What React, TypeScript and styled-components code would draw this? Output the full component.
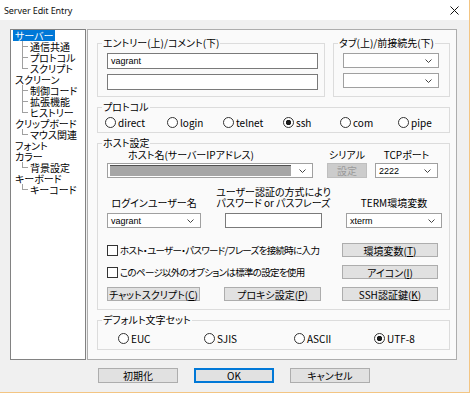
import React from "react";
import styled, { createGlobalStyle } from "styled-components";

const GlobalStyle = createGlobalStyle`
  html, body {
    margin: 0;
    padding: 0;
    background: #fff;
  }
`;

const UI_FONT = `"Noto Sans CJK JP", "Liberation Sans", sans-serif`;
const LATIN_FONT = `"Liberation Sans", "Noto Sans CJK JP", sans-serif`;

const Window = styled.div`
  width: 469px;
  height: 392px;
  border-right: 1px solid #f3c583;
  border-bottom: 1px solid #f3c583;
  display: flex;
  flex-direction: column;
  background: #f0f0f0;
  font-family: ${UI_FONT};
  font-size: 10px;
  color: #000;
  font-feature-settings: "palt" 1;
`;

const TitleBar = styled.div`
  height: 20px;
  flex: none;
  background: #fff;
  display: flex;
  align-items: center;
  justify-content: space-between;
  padding: 0 10px 0 4px;
`;

const Title = styled.span`
  font-family: "Noto Sans", "Open Sans", sans-serif;
  font-size: 9px;
  letter-spacing: -0.1px;
  color: #111;
`;

const Body = styled.div`
  flex: 1;
  display: flex;
  flex-direction: column;
  padding: 9px 12px 0 10px;
`;

const Panes = styled.div`
  display: flex;
  gap: 1px;
  height: 331px;
`;

const Tree = styled.div`
  width: 74px;
  flex: none;
  background: #fff;
  border: 1px solid #828282;
  line-height: 11px;
`;

const TreeRoot = styled.div`
  height: 11px;
  padding-left: 2px;
  white-space: nowrap;
`;

const TreeText = styled.span<{ $selected?: boolean }>`
  display: inline-block;
  padding: 0 2px;
  background: ${(p) => (p.$selected ? "#0078d7" : "transparent")};
  color: ${(p) => (p.$selected ? "#fff" : "#000")};
`;

const TreeChild = styled.div<{ $last?: boolean }>`
  position: relative;
  height: 11px;
  padding-left: 19px;
  white-space: nowrap;
  &::before {
    content: "";
    position: absolute;
    left: 11px;
    top: 0;
    height: ${(p) => (p.$last ? "6px" : "11px")};
    border-left: 1px solid #a0a0a0;
  }
  &::after {
    content: "";
    position: absolute;
    left: 11px;
    top: 5px;
    width: 6px;
    border-top: 1px solid #a0a0a0;
  }
`;

const MainPanel = styled.div`
  width: 353px;
  flex: none;
  border: 1px solid #adadad;
  background: #fafafa;
  padding: 7px 6px 0 9px;
  display: flex;
  flex-direction: column;
  gap: 4px;
`;

const Row = styled.div`
  display: flex;
  gap: 8px;
`;

const Group = styled.fieldset<{ $w?: number; $h: number }>`
  margin: 0;
  padding: 0;
  min-width: 0;
  box-sizing: border-box;
  width: ${(p) => (p.$w ? `${p.$w}px` : "auto")};
  height: ${(p) => p.$h}px;
  border: 1px solid #dcdcdc;
`;

const Legend = styled.legend`
  margin-left: 4px;
  padding: 0 1px;
  line-height: 12px;
  font-size: 10px;
`;

const StackBody = styled.div`
  display: flex;
  flex-direction: column;
  gap: 5px;
  padding: 4px 0 0 9px;
`;

const Edit = styled.div<{ $w: number; $h?: number }>`
  width: ${(p) => p.$w}px;
  height: ${(p) => p.$h ?? 16}px;
  box-sizing: border-box;
  border: 1px solid #7a7a7a;
  background: #fff;
  padding-left: 3px;
  font-family: ${LATIN_FONT};
  font-size: 9px;
  line-height: 14px;
`;

const Combo = styled.div<{ $w: number }>`
  width: ${(p) => p.$w}px;
  height: 15px;
  box-sizing: border-box;
  border: 1px solid #a0a0a0;
  background: #fff;
  display: flex;
  align-items: center;
  padding: 0 6px 0 3px;
  font-family: ${LATIN_FONT};
  font-size: 9px;
`;

const ComboText = styled.span`
  flex: 1;
`;

const ComboFill = styled.span`
  flex: 1;
  height: 10px;
  margin: 0 8px 0 -1px;
  background: #a6a6a6;
  border-top: 1px solid #505050;
`;

const Chevron = () => (
  <svg width="7" height="4" viewBox="0 0 7 4">
    <polyline points="0.5,0.5 3.5,3.5 6.5,0.5" fill="none" stroke="#444" strokeWidth="1" />
  </svg>
);

const RadioRow = styled.div<{ $cols: string; $pl: number; $mt: number }>`
  display: grid;
  grid-template-columns: ${(p) => p.$cols};
  padding-left: ${(p) => p.$pl}px;
  margin-top: ${(p) => p.$mt}px;
  align-items: center;
`;

const Choice = styled.span`
  display: inline-flex;
  align-items: center;
  gap: 2px;
  white-space: nowrap;
`;

const RadioDot = styled.span<{ $checked?: boolean }>`
  width: 9px;
  height: 9px;
  flex: none;
  border: 1px solid #333;
  border-radius: 50%;
  background: ${(p) =>
    p.$checked ? "radial-gradient(circle, #1a1a1a 0 2.4px, #fff 3px)" : "#fff"};
`;

const Radio = ({ label, checked }: { label: string; checked?: boolean }) => (
  <Choice>
    <RadioDot $checked={checked} />
    {label}
  </Choice>
);

const HostBody = styled.div`
  padding-left: 9px;
`;

const TopRow = styled.div`
  display: flex;
  align-items: flex-end;
`;

const Field = styled.div<{ $w: number; $ml?: number }>`
  width: ${(p) => p.$w}px;
  margin-left: ${(p) => p.$ml ?? 0}px;
  display: flex;
  flex-direction: column;
  gap: 2px;
`;

const FieldLabel = styled.div<{ $pr?: number }>`
  height: 12px;
  line-height: 12px;
  text-align: center;
  white-space: nowrap;
  padding-right: ${(p) => p.$pr ?? 0}px;
`;

const Grid = styled.div`
  display: grid;
  grid-template-columns: 94px 97px 96px;
  column-gap: 24px;
  margin-top: 8px;
`;

const TallLabel = styled.div`
  height: 22px;
  line-height: 11px;
  display: flex;
  flex-direction: column;
  justify-content: flex-end;
  align-items: center;
  white-space: nowrap;
  margin-bottom: 5px;
`;

const Actions = styled.div`
  display: grid;
  grid-template-columns: 214px 96px;
  grid-auto-rows: 14px;
  row-gap: 8px;
  column-gap: 21px;
  margin-top: 15px;
`;

const CheckLine = styled.span`
  display: flex;
  align-items: center;
  gap: 2px;
  white-space: nowrap;
  font-size: 9.5px;
  letter-spacing: -0.7px;
`;

const CheckBox = styled.span`
  width: 9px;
  height: 9px;
  flex: none;
  border: 1px solid #333;
  background: #fff;
`;

const Pair = styled.div`
  display: flex;
  justify-content: space-between;
`;

const Button = styled.div<{ $w: number; $h?: number; $default?: boolean; $disabled?: boolean }>`
  width: ${(p) => p.$w}px;
  height: ${(p) => p.$h ?? 14}px;
  box-sizing: border-box;
  display: flex;
  align-items: center;
  justify-content: center;
  white-space: nowrap;
  background: ${(p) => (p.$disabled ? "#cccccc" : "#e1e1e1")};
  color: ${(p) => (p.$disabled ? "#9a9a9a" : "#000")};
  border: 1px solid ${(p) => (p.$default ? "#0078d7" : p.$disabled ? "#bfbfbf" : "#adadad")};
  box-shadow: ${(p) => (p.$default ? "inset 0 0 0 1px #0078d7" : "none")};
`;

const ButtonBar = styled.div`
  display: flex;
  margin-top: 8px;
  padding-left: 88px;
  gap: 16px;
`;

const CloseIcon = () => (
  <svg width="9" height="9" viewBox="0 0 9 9">
    <path d="M0.5 0.5 L8.5 8.5 M8.5 0.5 L0.5 8.5" stroke="#111" strokeWidth="1" />
  </svg>
);

const treeData: { name: string; selected?: boolean; children: string[] }[] = [
  { name: "サーバー", selected: true, children: ["通信共通", "プロトコル", "スクリプト"] },
  { name: "スクリーン", children: ["制御コード", "拡張機能", "ヒストリー"] },
  { name: "クリップボード", children: ["マウス関連"] },
  { name: "フォント", children: [] },
  { name: "カラー", children: ["背景設定"] },
  { name: "キーボード", children: ["キーコード"] },
];

export default function App() {
  return (
    <>
      <GlobalStyle />
      <Window>
        <TitleBar>
          <Title>Server Edit Entry</Title>
          <CloseIcon />
        </TitleBar>
        <Body>
          <Panes>
            <Tree>
              {treeData.map((node) => (
                <React.Fragment key={node.name}>
                  <TreeRoot>
                    <TreeText $selected={node.selected}>{node.name}</TreeText>
                  </TreeRoot>
                  {node.children.map((c, i) => (
                    <TreeChild key={c} $last={i === node.children.length - 1}>
                      {c}
                    </TreeChild>
                  ))}
                </React.Fragment>
              ))}
            </Tree>
            <MainPanel>
              <Row>
                <Group $w={228} $h={60}>
                  <Legend>エントリー(上)/コメント(下)</Legend>
                  <StackBody>
                    <Edit $w={211}>vagrant</Edit>
                    <Edit $w={211} />
                  </StackBody>
                </Group>
                <Group $w={117} $h={60}>
                  <Legend>タブ(上)/前接続先(下)</Legend>
                  <StackBody>
                    <Combo $w={96}>
                      <ComboText />
                      <Chevron />
                    </Combo>
                    <Combo $w={96}>
                      <ComboText />
                      <Chevron />
                    </Combo>
                  </StackBody>
                </Group>
              </Row>
              <Group $h={32}>
                <Legend>プロトコル</Legend>
                <RadioRow $cols="62px 56px 60px 57px 58px auto" $pl={7} $mt={2}>
                  <Radio label="direct" />
                  <Radio label="login" />
                  <Radio label="telnet" />
                  <Radio label="ssh" checked />
                  <Radio label="com" />
                  <Radio label="pipe" />
                </RadioRow>
              </Group>
              <Group $h={173}>
                <Legend>ホスト設定</Legend>
                <HostBody>
                  <TopRow>
                    <Field $w={206}>
                      <FieldLabel $pr={38}>ホスト名(サーバーIPアドレス)</FieldLabel>
                      <Combo $w={206}>
                        <ComboFill />
                        <Chevron />
                      </Combo>
                    </Field>
                    <Field $w={40} $ml={14}>
                      <FieldLabel>シリアル</FieldLabel>
                      <Button $w={40} $h={15} $disabled>
                        設定
                      </Button>
                    </Field>
                    <Field $w={63} $ml={8}>
                      <FieldLabel>TCPポート</FieldLabel>
                      <Combo $w={63}>
                        <ComboText>2222</ComboText>
                        <Chevron />
                      </Combo>
                    </Field>
                  </TopRow>
                  <Grid>
                    <div>
                      <TallLabel>ログインユーザー名</TallLabel>
                      <Combo $w={94}>
                        <ComboText>vagrant</ComboText>
                        <Chevron />
                      </Combo>
                    </div>
                    <div>
                      <TallLabel>
                        <span>ユーザー認証の方式により</span>
                        <span>パスワード or パスフレーズ</span>
                      </TallLabel>
                      <Edit $w={97} $h={15} />
                    </div>
                    <div>
                      <TallLabel>TERM環境変数</TallLabel>
                      <Combo $w={96}>
                        <ComboText>xterm</ComboText>
                        <Chevron />
                      </Combo>
                    </div>
                  </Grid>
                  <Actions>
                    <CheckLine>
                      <CheckBox />
                      ホスト・ユーザー・パスワード/フレーズを接続時に入力
                    </CheckLine>
                    <Button $w={96}>
                      環境変数(<u>T</u>)
                    </Button>
                    <CheckLine>
                      <CheckBox />
                      このページ以外のオプションは標準の設定を使用
                    </CheckLine>
                    <Button $w={96}>
                      アイコン(<u>I</u>)
                    </Button>
                    <Pair>
                      <Button $w={93}>
                        チャットスクリプト(<u>C</u>)
                      </Button>
                      <Button $w={97}>
                        プロキシ設定(<u>P</u>)
                      </Button>
                    </Pair>
                    <Button $w={96}>
                      SSH認証鍵(<u>K</u>)
                    </Button>
                  </Actions>
                </HostBody>
              </Group>
              <Group $h={36}>
                <Legend>デフォルト文字セット</Legend>
                <RadioRow $cols="86px 90px 80px auto" $pl={20} $mt={5}>
                  <Radio label="EUC" />
                  <Radio label="SJIS" />
                  <Radio label="ASCII" />
                  <Radio label="UTF-8" checked />
                </RadioRow>
              </Group>
            </MainPanel>
          </Panes>
          <ButtonBar>
            <Button $w={80} $h={15}>
              初期化
            </Button>
            <Button $w={80} $h={15} $default>
              OK
            </Button>
            <Button $w={80} $h={15}>
              キャンセル
            </Button>
          </ButtonBar>
        </Body>
      </Window>
    </>
  );
}
